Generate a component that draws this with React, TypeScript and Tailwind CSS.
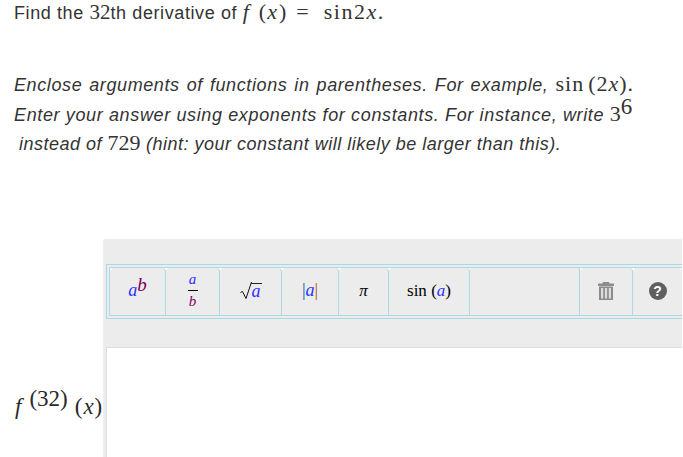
const serif = "font-['Liberation_Serif',serif]";

function Btn({ w, children, flat }: { w: string; children?: React.ReactNode; flat?: boolean }) {
  return (
    <div className={`${w} h-full shrink-0 flex items-center justify-center pb-[2px] bg-[#ececec] border-r border-[#a9d8e6] ${flat ? "" : "rounded-t-[4px]"}`}>
      {children}
    </div>
  );
}

const A = () => <i className="text-[#2f2fff]">a</i>;
const B = () => <i className="text-[#800060]">b</i>;

export default function App() {
  return (
    <div className="w-[683px] h-[457px] overflow-hidden bg-white text-[#333] font-['Liberation_Sans',sans-serif] text-[18px] tracking-[0.6px] flex flex-col">
      <p className="pl-[14px] pt-[1px] h-[24px] leading-[21px] whitespace-nowrap">
        Find the <span className={`${serif} text-[21px] tracking-normal`}>32</span>th derivative of{" "}
        <span className={`${serif} text-[22px] tracking-normal`}>
          <i>f</i><span className="ml-[10px] tracking-[1px]">(<i className="mr-[1px]">x</i>)</span>
          <span className="ml-[9px] mr-[15px]">=</span>
          <span className="tracking-[1.5px]">sin2<i>x</i>.</span>
        </span>
      </p>
      <div className="mt-[46px] italic h-[99px]">
        <p className="pl-[14px] h-[29px] leading-[27px] whitespace-nowrap [word-spacing:1.4px]">
          Enclose arguments of functions in parentheses. For example,{" "}
          <span className={`${serif} not-italic text-[22px] tracking-[1px] [word-spacing:0]`}>sin<span className="ml-[4px]">(2<i>x</i>).</span></span>
        </p>
        <p className="pl-[14px] h-[30px] leading-[30px] whitespace-nowrap tracking-[0.63px]">
          Enter your answer using exponents for constants. For instance, write{" "}
          <span className={`${serif} not-italic text-[22px] tracking-normal`}>3<sup className="text-[23px] -top-[7px] leading-none">6</sup></span>
        </p>
        <p className="pl-[19px] h-[29px] leading-[28px] whitespace-nowrap tracking-[0.5px]">
          instead of <span className={`${serif} not-italic text-[22px] tracking-normal`}>729</span> (hint: your constant will likely be larger than this).
        </p>
      </div>
      <div className="mt-[70px] flex flex-1 min-h-0">
        <div className="w-[103px] shrink-0 flex items-end pb-[33px] pl-[15px]">
          <span className={`${serif} text-[#2a2a2a] text-[23px] tracking-normal whitespace-nowrap`}>
            <i>f</i><sup className="text-[23px] -top-[8px] leading-none ml-[8px]">(32)</sup><span className="ml-[7px] tracking-[1px]">(<i>x</i>)</span>
          </span>
        </div>
        <div className="w-[579px] bg-[#ececec] rounded-tl-[3px] pt-[25px] flex flex-col">
          <div className="ml-[3px] h-[55px] border-y border-l border-[#a9d8e6] py-[2px] pl-[2px]">
            <div className={`h-full flex bg-white border-y border-l border-[#a9d8e6] tracking-normal ${serif} text-[#222]`}>
              <Btn w="w-[56px]">
                <span className="text-[18px] relative">
                  <A /><sup className="text-[19px] -top-[5px] leading-none"><B /></sup>
                </span>
              </Btn>
              <Btn w="w-[54px]">
                <span className="flex flex-col items-center text-[15px] leading-[15px]">
                  <A />
                  <span className="w-[10px] h-px bg-black my-[3px]" />
                  <B />
                </span>
              </Btn>
              <Btn w="w-[62px]">
                <span className="text-[18px] flex items-center">
                  <svg width="12" height="19" viewBox="0 0 12 19" className="mr-[-1px]">
                    <path d="M0.5 11.500 L2.500 10.500 L6 17.500 L11.500 1" fill="none" stroke="#111" strokeWidth="1" />
                  </svg>
                  <span className="border-t border-[#222] leading-[15px] px-px"><A /></span>
                </span>
              </Btn>
              <Btn w="w-[57px]">
                <span className="text-[18px]"><span className="text-[#0060a0]">|</span><A /><span className="text-[#a06000]">|</span></span>
              </Btn>
              <Btn w="w-[50px]">
                <i className="text-[17px] text-black">π</i>
              </Btn>
              <Btn w="w-[81px]">
                <span className="text-[17px] text-black">sin <span>(<A />)</span></span>
              </Btn>
              <Btn w="w-[110px]" flat />
              <Btn w="w-[53px]">
                <svg width="16" height="18" viewBox="0 0 16 18">
                  <path d="M5 0h6l0.500 1.500h4.500v2.500H0V1.500h4.500z" fill="#8c8c8c" />
                  <rect x="1" y="4.500" width="14" height="13.500" fill="#8c8c8c" />
                  <rect x="3" y="6" width="2.200" height="10.500" fill="#dcdcdc" />
                  <rect x="6.900" y="6" width="2.200" height="10.500" fill="#dcdcdc" />
                  <rect x="10.800" y="6" width="2.200" height="10.500" fill="#dcdcdc" />
                </svg>
              </Btn>
              <div className="flex-1 h-full flex items-center justify-center pb-[2px] bg-[#ececec] rounded-t-[4px]">
                <span className="w-[18px] h-[18px] rounded-full bg-[#5f5f5f] text-white text-[14px] leading-none font-bold flex items-center justify-center font-['Liberation_Sans',sans-serif]">?</span>
              </div>
            </div>
          </div>
          <div className="mt-[28px] ml-[3px] flex-1 bg-white border-t border-l border-[#dedede]" />
        </div>
      </div>
    </div>
  );
}
